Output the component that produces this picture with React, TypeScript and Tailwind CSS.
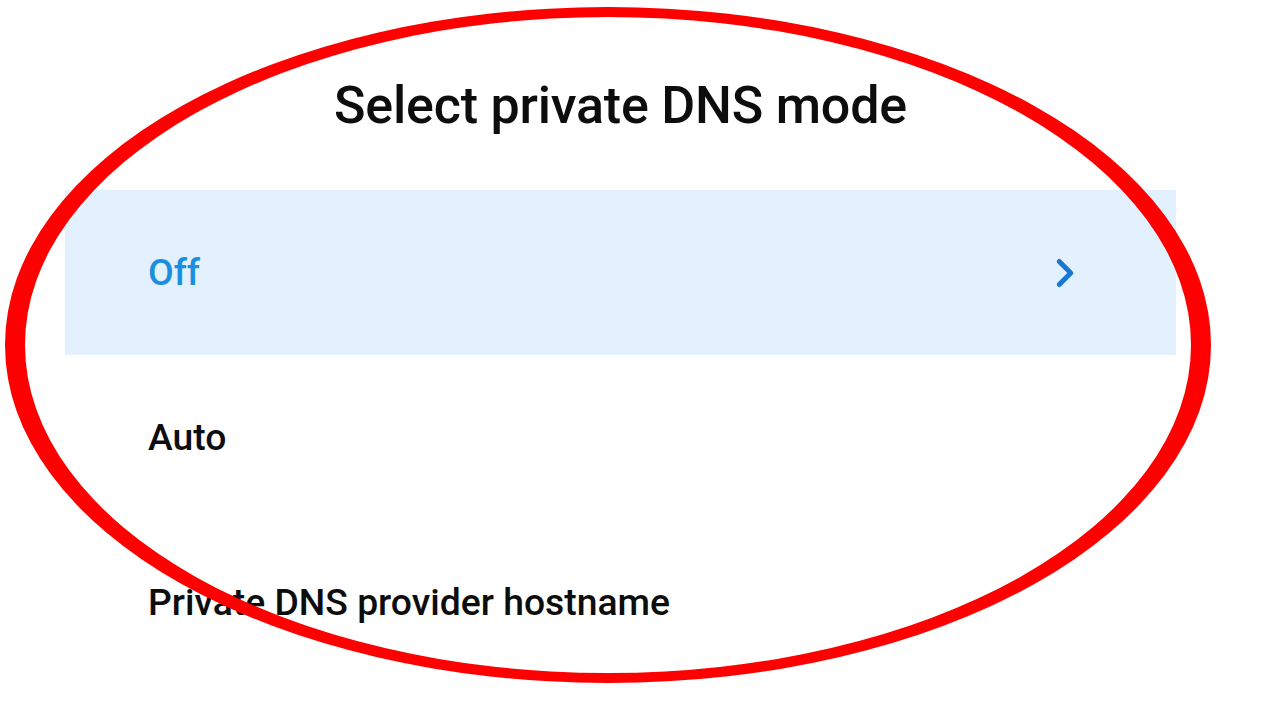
import { ChevronRight } from "lucide-react";

const options = [
  { label: "Off", selected: true },
  { label: "Auto", selected: false },
  { label: "Private DNS provider hostname", selected: false },
];

export default function App() {
  return (
    <div className="relative w-[1280px] h-[720px] overflow-hidden bg-white font-['Roboto',sans-serif]">
      <div className="ml-[65px] w-[1111px] pt-[76px]">
        <h1 className="text-center text-[52px] leading-[60px] font-medium text-[#0d0d0d] tracking-[-0.2px]">
          Select private DNS mode
        </h1>
        <ul className="mt-[54px]">
          {options.map((o) => (
            <li
              key={o.label}
              className={`h-[165px] flex items-center pl-[83px] pr-[88px] ${
                o.selected ? "bg-[#e3f0fd]" : ""
              }`}
            >
              <span
                className={`flex-1 text-[37.3px] font-medium ${
                  o.selected ? "text-[#1a8fe0]" : "text-[#0d0d0d]"
                }`}
              >
                {o.label}
              </span>
              {o.selected && (
                <ChevronRight className="w-[46px] h-[46px] text-[#1976d2]" strokeWidth={2.6} />
              )}
            </li>
          ))}
        </ul>
      </div>

      {/* red marker ellipse drawn on top */}
      <svg
        className="absolute inset-0 pointer-events-none"
        width="1280"
        height="720"
        viewBox="0 0 1280 720"
      >
        <path
          fill="#ff0000"
          fillRule="evenodd"
          d="M5 345 A603 338 0 1 0 1211 345 A603 338 0 1 0 5 345 Z M25 345 A583 328 0 1 0 1191 345 A583 328 0 1 0 25 345 Z"
        />
      </svg>
    </div>
  );
}
